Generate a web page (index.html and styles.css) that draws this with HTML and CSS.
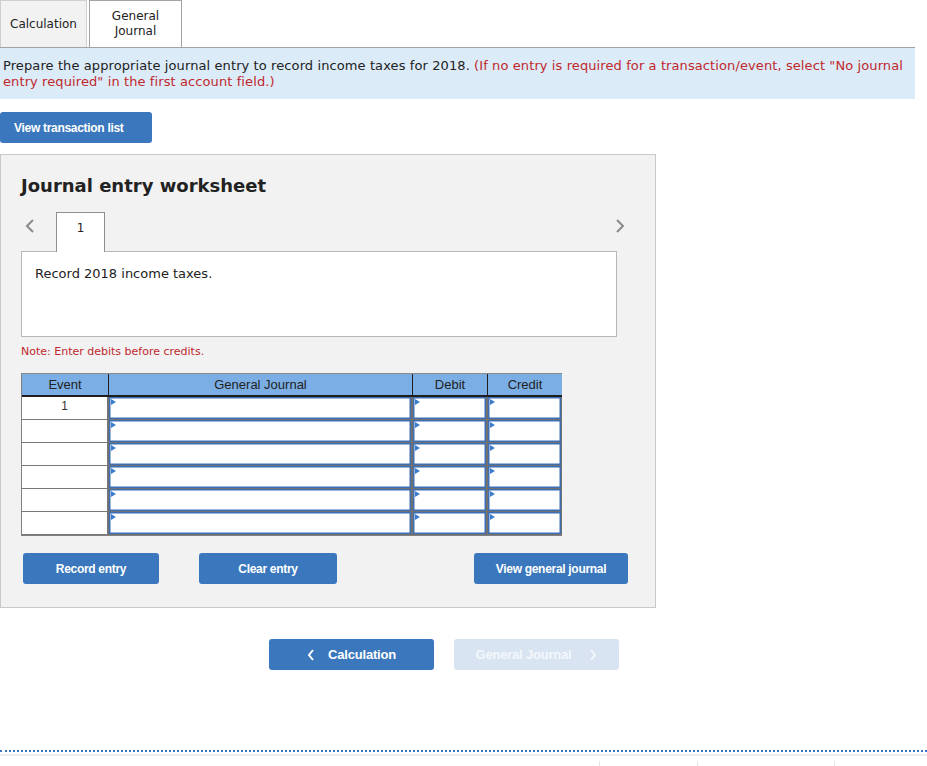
FILE: index.html
```html
<!DOCTYPE html>
<html lang="en">
<head>
  <meta charset="UTF-8" />
  <title>General Journal</title>
  <link rel="stylesheet" href="styles.css">
</head>
<body>

  <div class="page">
    <div class="tabs">
      <div class="tab">Calculation</div>
      <div class="tab active">General<br>Journal</div>
    </div>

    <div class="instructions">
      Prepare the appropriate journal entry to record income taxes for 2018.
      <span class="red">(If no entry is required for a transaction/event, select "No journal entry required" in the first account field.)</span>
    </div>

    <button class="btn list-btn">View transaction list</button>

    <div class="worksheet">
      <h2>Journal entry worksheet</h2>

      <div class="steps">
        <span class="arrow">
          <svg width="10" height="14" viewBox="0 0 10 14"><path d="M8 1 L2 7 L8 13" fill="none" stroke="#8a8a8a" stroke-width="2"/></svg>
        </span>
        <div class="step">1</div>
        <span class="arrow right">
          <svg width="10" height="14" viewBox="0 0 10 14"><path d="M2 1 L8 7 L2 13" fill="none" stroke="#8a8a8a" stroke-width="2"/></svg>
        </span>
      </div>

      <div class="description">Record 2018 income taxes.</div>

      <p class="note">Note: Enter debits before credits.</p>

      <div class="journal">
        <div class="head">Event</div>
        <div class="head">General Journal</div>
        <div class="head">Debit</div>
        <div class="head">Credit</div>

        <div class="event">1</div><div class="field"></div><div class="field"></div><div class="field"></div>
        <div class="event"></div><div class="field"></div><div class="field"></div><div class="field"></div>
        <div class="event"></div><div class="field"></div><div class="field"></div><div class="field"></div>
        <div class="event"></div><div class="field"></div><div class="field"></div><div class="field"></div>
        <div class="event"></div><div class="field"></div><div class="field"></div><div class="field"></div>
        <div class="event"></div><div class="field"></div><div class="field"></div><div class="field"></div>
      </div>

      <div class="actions">
        <button class="btn record">Record entry</button>
        <button class="btn clear">Clear entry</button>
        <button class="btn view">View general journal</button>
      </div>
    </div>

    <div class="nav">
      <button class="btn nav-btn">
        <svg width="8" height="12" viewBox="0 0 8 12"><path d="M6 1 L2 6 L6 11" fill="none" stroke="#fff" stroke-width="2"/></svg>
        Calculation
      </button>
      <button class="btn nav-btn disabled">
        General Journal
        <svg width="8" height="12" viewBox="0 0 8 12"><path d="M2 1 L6 6 L2 11" fill="none" stroke="#f3f7fb" stroke-width="2"/></svg>
      </button>
    </div>
  </div>

  <div class="footer">
    <div class="tools">
      <span></span><span></span><span></span>
    </div>
  </div>

</body>
</html>
```

FILE: styles.css
```css
body {
  margin: 0;
  font-family: "DejaVu Sans", Verdana, sans-serif;
  color: #222;
  background: #fff;
}

.page {
  width: 915px;
}

.tabs {
  display: flex;
  gap: 2px;
  height: 47px;
  border-bottom: 1px solid #a3a3a3;
}

.tab {
  width: 85px;
  background: #f2f2f2;
  border: 1px solid #cfcfcf;
  border-bottom: none;
  font-size: 12px;
  line-height: 15px;
  display: flex;
  align-items: center;
  justify-content: center;
  text-align: center;
}

.tab.active {
  width: 91px;
  background: #fff;
  border-color: #a3a3a3;
}

.instructions {
  background: #dcebf8;
  padding: 10px 3px 9px;
  font-size: 13px;
  line-height: 16px;
  letter-spacing: 0.1px;
}

.red {
  color: #c0282d;
}

.btn {
  border: none;
  border-radius: 3px;
  background: #3a77bd;
  color: #fff;
  font-family: "Liberation Sans", Arial, sans-serif;
  font-weight: bold;
  font-size: 12px;
  letter-spacing: -0.3px;
  height: 31px;
  padding: 0;
  cursor: pointer;
}

.list-btn {
  display: block;
  margin-top: 13px;
  width: 152px;
  text-align: left;
  padding-left: 14px;
}

.worksheet {
  margin-top: 11px;
  width: 634px;
  background: #f2f2f2;
  border: 1px solid #c8c8c8;
  padding: 20px 0 23px 20px;
}

.worksheet h2 {
  margin: 0;
  font-size: 18px;
  line-height: 22px;
}

.steps {
  display: flex;
  align-items: flex-start;
  margin-top: 14px;
  width: 604px;
  height: 40px;
}

.arrow {
  width: 35px;
  padding: 8px 0 0 4px;
  box-sizing: border-box;
  display: flex;
}

.arrow.right {
  margin-left: auto;
  width: auto;
  padding-left: 0;
}

.step {
  align-self: stretch;
  width: 49px;
  background: #fff;
  border: 1px solid #8f8f8f;
  border-bottom: none;
  font-size: 12px;
  line-height: 16px;
  text-align: center;
  padding-top: 7px;
  box-sizing: border-box;
  position: relative;
  top: 1px;
}

.description {
  width: 581px;
  height: 70px;
  background: #fff;
  border: 1px solid #b8b8b8;
  padding: 14px 0 0 13px;
  font-size: 13px;
  line-height: 16px;
}

.note {
  margin: 8px 0 0;
  color: #c0282d;
  font-size: 11px;
  line-height: 14px;
}

.journal {
  margin-top: 14px;
  display: grid;
  grid-template-columns: 86px 304px 75px 75px;
  grid-auto-rows: 23px;
  width: 541px;
  font-family: "Liberation Sans", Arial, sans-serif;
  font-size: 13px;
  border: 1px solid #808080;
  border-top-color: #8a8a8a;
  box-sizing: border-box;
  background: #777;
}

.head {
  background: #7aaee4;
  color: #222;
  text-align: center;
  line-height: 21px;
  height: 23px;
  box-sizing: border-box;
  border-bottom: 2px solid #1e1e1e;
  border-left: 1px solid #1e1e1e;
}

.head:first-child {
  border-left: none;
}

.event {
  background: #fff;
  border-bottom: 1px solid #777;
  border-right: 1px solid #777;
  text-align: center;
  line-height: 18px;
  font-size: 12px;
  color: #333;
}

.field {
  background: #fff;
  border: 1px solid #707070;
  border-top: none;
  box-shadow: inset 0 0 0 1.5px #3c6fb3;
  position: relative;
}

.field::before {
  content: "";
  position: absolute;
  top: 2px;
  left: 2px;
  border-left: 5px solid #3b7ccf;
  border-top: 3px solid transparent;
  border-bottom: 3px solid transparent;
}

.actions {
  display: flex;
  margin-top: 17px;
  padding-left: 2px;
}

.actions .record {
  width: 136px;
}

.actions .clear {
  width: 138px;
  margin-left: 40px;
}

.actions .view {
  width: 154px;
  margin-left: 137px;
}

.nav {
  display: flex;
  gap: 20px;
  margin: 31px 0 0 269px;
}

.nav-btn {
  width: 165px;
  font-size: 13px;
  letter-spacing: -0.2px;
  display: flex;
  align-items: center;
  justify-content: center;
  gap: 13px;
}

.nav-btn.disabled {
  background: #d8e4f1;
  color: #f3f7fb;
  gap: 18px;
  cursor: default;
}

.footer {
  margin-top: 80px;
  border-top: 2px dotted #3a77bd;
}

.tools {
  border-top: 2px solid #eeeeee;
  margin-top: 2px;
  height: 12px;
  display: flex;
}

.tools span {
  border-left: 1px solid #e6e6e6;
  margin-top: 5px;
}

.tools span:nth-child(1) {
  margin-left: 599px;
  width: 97px;
}

.tools span:nth-child(2) {
  width: 136px;
}
```
